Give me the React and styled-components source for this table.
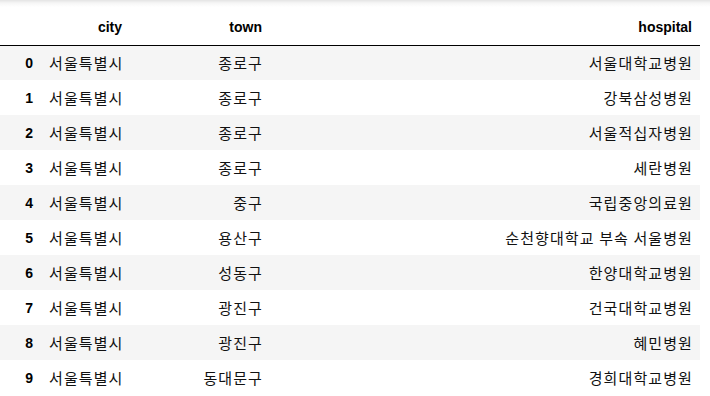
import React from "react";
import styled, { createGlobalStyle } from "styled-components";

const Global = createGlobalStyle`
  html, body { margin: 0; padding: 0; background: #fff; }
  body { font-family: "Liberation Sans", "Noto Sans CJK KR", Arial, sans-serif; color: #000; }
`;

const Page = styled.div`
  width: 710px;
  height: 396px;
  overflow: hidden;
  background: #fff;
`;

const TopShade = styled.div`
  height: 10px;
  background: linear-gradient(to bottom, #e4e4e4 0px, #f6f6f6 3px, #ffffff 7px);
`;

const Table = styled.table`
  width: 700px;
  border-collapse: collapse;
  border-spacing: 0;
  table-layout: fixed;
  font-size: 14px;
`;

const HeadRow = styled.tr`
  height: 35px;
  border-bottom: 1px solid #000;
`;

const Th = styled.th`
  text-align: right;
  font-weight: bold;
  padding: 0 8px;
  vertical-align: middle;
  font-family: "Liberation Sans", Arial, sans-serif;
`;

const Row = styled.tr`
  height: 35px;
  background: ${(p) => (p.$odd ? "#fff" : "#f5f5f5")};
`;

const IndexCell = styled.th`
  text-align: right;
  font-weight: bold;
  padding: 0 8px;
  font-family: "Liberation Sans", Arial, sans-serif;
`;

const Td = styled.td`
  text-align: right;
  padding: 0 7px 0 8px;
  white-space: nowrap;
  font-family: "Noto Sans CJK KR", "Liberation Sans", sans-serif;
  font-size: 15px;
  letter-spacing: 1.1px;
  color: #111;
`;

const data = [
  ["서울특별시", "종로구", "서울대학교병원"],
  ["서울특별시", "종로구", "강북삼성병원"],
  ["서울특별시", "종로구", "서울적십자병원"],
  ["서울특별시", "종로구", "세란병원"],
  ["서울특별시", "중구", "국립중앙의료원"],
  ["서울특별시", "용산구", "순천향대학교 부속 서울병원"],
  ["서울특별시", "성동구", "한양대학교병원"],
  ["서울특별시", "광진구", "건국대학교병원"],
  ["서울특별시", "광진구", "혜민병원"],
  ["서울특별시", "동대문구", "경희대학교병원"],
];

export default function App() {
  return (
    <Page>
      <Global />
      <TopShade />
      <Table>
        <colgroup>
          <col style={{ width: 41 }} />
          <col style={{ width: 89 }} />
          <col style={{ width: 140 }} />
          <col style={{ width: 430 }} />
        </colgroup>
        <thead>
          <HeadRow>
            <Th></Th>
            <Th>city</Th>
            <Th>town</Th>
            <Th>hospital</Th>
          </HeadRow>
        </thead>
        <tbody>
          {data.map((r, i) => (
            <Row key={i} $odd={i % 2 === 1}>
              <IndexCell>{i}</IndexCell>
              <Td>{r[0]}</Td>
              <Td>{r[1]}</Td>
              <Td>{r[2]}</Td>
            </Row>
          ))}
        </tbody>
      </Table>
    </Page>
  );
}
